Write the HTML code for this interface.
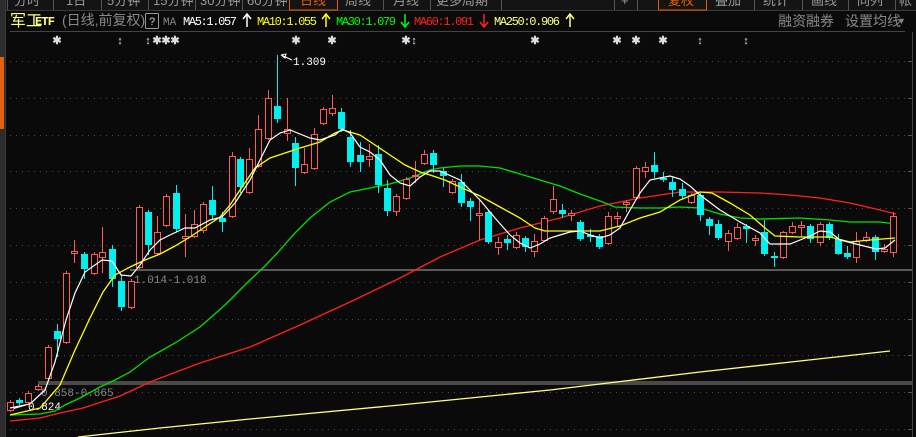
<!DOCTYPE html>
<html><head><meta charset="utf-8"><style>
html,body{margin:0;padding:0;background:#0a0a0a;width:916px;height:437px;overflow:hidden}
svg{display:block}
.t{font-family:"Liberation Sans","Noto Sans CJK SC",sans-serif}
.m{font-family:"Liberation Mono","Noto Sans CJK SC",monospace}
.r line{stroke:#ff5a5a;stroke-width:1}
.r rect{stroke:#ff5a5a;stroke-width:1;fill:#0a0a0a}
.c line{stroke:#00f0f0;stroke-width:1}
.c rect{fill:#00f0f0}
.g{stroke:#4a4a4a;stroke-width:1;stroke-dasharray:1 5}
</style></head><body>
<svg width="916" height="437" viewBox="0 0 916 437" xmlns="http://www.w3.org/2000/svg">
<rect width="916" height="437" fill="#0a0a0a"/>
<rect x="0" y="0" width="5" height="437" fill="#2c2c2c"/>
<rect x="0" y="57" width="4" height="72" fill="#e0600f"/>
<line x1="5.5" y1="0" x2="5.5" y2="437" stroke="#3a3a3a"/>
<rect x="6" y="0" width="910" height="10" fill="#141414"/>
<line x1="6" y1="10.5" x2="916" y2="10.5" stroke="#3a3a3a"/>
<g stroke="#555">
<line x1="7.5" y1="0" x2="7.5" y2="10"/><line x1="53.5" y1="0" x2="53.5" y2="10"/><line x1="101.5" y1="0" x2="101.5" y2="10"/><line x1="148.5" y1="0" x2="148.5" y2="10"/><line x1="195.5" y1="0" x2="195.5" y2="10"/><line x1="242.5" y1="0" x2="242.5" y2="10"/><line x1="383.5" y1="0" x2="383.5" y2="10"/><line x1="430.5" y1="0" x2="430.5" y2="10"/><line x1="501.5" y1="0" x2="501.5" y2="10"/><line x1="614.5" y1="0" x2="614.5" y2="10"/><line x1="637.5" y1="0" x2="637.5" y2="10"/><line x1="754.5" y1="0" x2="754.5" y2="10"/><line x1="802.5" y1="0" x2="802.5" y2="10"/><line x1="848.5" y1="0" x2="848.5" y2="10"/><line x1="895.5" y1="0" x2="895.5" y2="10"/>
</g>
<rect x="289.5" y="-1" width="48" height="11" fill="none" stroke="#e0600f"/>
<rect x="658.5" y="-1" width="48" height="11" fill="none" stroke="#e0600f"/>
<g class="t" font-size="13" fill="#999">
<text x="14" y="5">分时</text><text x="66" y="5">1日</text><text x="107" y="5">5分钟</text><text x="153" y="5">15分钟</text><text x="200" y="5">30分钟</text><text x="247" y="5">60分钟</text><text x="300" y="5" fill="#e0600f">日线</text><text x="345" y="5">周线</text><text x="393" y="5">月线</text><text x="436" y="5">更多周期</text><text x="621" y="5">+</text><text x="668" y="5" fill="#e0600f">复权</text><text x="715" y="5">叠加</text><text x="763" y="5">统计</text><text x="811" y="5">画线</text><text x="857" y="5">同列</text><text x="899" y="5">帐</text>
</g>
<text x="10" y="26" class="t" font-size="16" fill="#ffff80">军工</text>
<text x="35" y="25" class="m" font-size="12" font-weight="bold" fill="#ffff80" textLength="20">ETF</text>
<text x="62" y="25" class="t" font-size="14" fill="#888">(日线,前复权)</text>
<rect x="145.5" y="13.5" width="13" height="15" fill="none" stroke="#999" rx="1"/>
<text x="149" y="25" class="m" font-size="11" fill="#ccc">?</text>
<text x="163" y="25" class="m" font-size="11" fill="#888">MA</text>
<g class="m" font-size="12">
<text x="183" y="25" fill="#fff" textLength="54">MA5:1.057</text>
<text x="257" y="25" fill="#ffff00" textLength="60">MA10:1.055</text>
<text x="336" y="25" fill="#00ff00" textLength="60">MA30:1.079</text>
<text x="414" y="25" fill="#ff2020" textLength="60">MA60:1.091</text>
<text x="494" y="25" fill="#ffff80" textLength="66">MA250:0.906</text>
</g>
<g fill="none" stroke-width="1.5">
<path d="M247 27V15M243 19L247 14L251 19" stroke="#fff"/>
<path d="M326 27V15M322 19L326 14L330 19" stroke="#ffff00"/>
<path d="M405 14V26M401 22L405 27L409 22" stroke="#00ff00"/>
<path d="M484 14V26M480 22L484 27L488 22" stroke="#ff2020"/>
<path d="M570 27V15M566 19L570 14L574 19" stroke="#ffff80"/>
</g>
<text x="778" y="26" class="t" font-size="14" fill="#888">融资融券</text>
<text x="845" y="26" class="t" font-size="14" fill="#888">设置均线</text>
<text x="897" y="24" class="t" font-size="9" fill="#888">▼</text>
<line x1="10" y1="31.5" x2="905" y2="31.5" stroke="#444"/>
<g class="t" font-size="11" fill="#ddd" font-weight="bold" text-anchor="middle">
<text x="57" y="44">✱</text><text x="120" y="44">↕</text><text x="148" y="44">↕</text><text x="157" y="44">✱</text><text x="166" y="44">✱</text><text x="175" y="44">✱</text><text x="296" y="44">✱</text><text x="332" y="44">✱</text><text x="406" y="44">✱</text><text x="414" y="44">↕</text><text x="535" y="44">✱</text><text x="617" y="44">✱</text><text x="636" y="44">✱</text><text x="663" y="44">✱</text><text x="700" y="44">↕</text><text x="746" y="44">↕</text>
</g>
<line x1="912.5" y1="32" x2="912.5" y2="437" stroke="#444"/>
<g class="g">
<line x1="10" y1="61.5" x2="906" y2="61.5"/><line x1="10" y1="98.5" x2="906" y2="98.5"/><line x1="10" y1="135.5" x2="906" y2="135.5"/><line x1="10" y1="171.5" x2="906" y2="171.5"/><line x1="10" y1="208.5" x2="906" y2="208.5"/><line x1="10" y1="245.5" x2="906" y2="245.5"/><line x1="10" y1="282.5" x2="906" y2="282.5"/><line x1="10" y1="319.5" x2="906" y2="319.5"/><line x1="10" y1="355.5" x2="906" y2="355.5"/><line x1="10" y1="392.5" x2="906" y2="392.5"/><line x1="10" y1="429.5" x2="906" y2="429.5"/>
</g>
<g stroke="#555">
<line x1="908" y1="61.5" x2="912" y2="61.5"/><line x1="908" y1="98.5" x2="912" y2="98.5"/><line x1="908" y1="135.5" x2="912" y2="135.5"/><line x1="908" y1="171.5" x2="912" y2="171.5"/><line x1="908" y1="208.5" x2="912" y2="208.5"/><line x1="908" y1="245.5" x2="912" y2="245.5"/><line x1="908" y1="282.5" x2="912" y2="282.5"/><line x1="908" y1="319.5" x2="912" y2="319.5"/><line x1="908" y1="355.5" x2="912" y2="355.5"/><line x1="908" y1="392.5" x2="912" y2="392.5"/><line x1="908" y1="429.5" x2="912" y2="429.5"/>
</g>
<rect x="130" y="269" width="782" height="2" fill="#5a5a5a"/>
<rect x="38" y="381" width="874" height="4" fill="#4a4a4a"/>
<text x="134" y="283" class="m" font-size="11" fill="#888">1.014-1.018</text>
<text x="41" y="396" class="m" font-size="11" fill="#888">0.858-0.865</text>
<text x="28" y="410" class="m" font-size="11" fill="#fff">0.824</text>
<polyline points="12,409 26,405" fill="none" stroke="#fff"/>
<text x="293" y="65" class="m" font-size="11" fill="#fff">1.309</text>
<polyline points="281,55 286,54 285,58 281,55 292,60" fill="none" stroke="#fff"/>
<polyline fill="none" stroke="#ffff80" stroke-width="1.3" points="78,437 160,428 250,419 400,405 550,390 700,372 800,361 890,351"/>
<polyline fill="none" stroke="#ff2020" stroke-width="1.3" points="10,421 40,418 60,413 83,408 120,396 150,382 200,363 250,347 300,325 350,302 400,278 440,257 480,240 520,228 560,218 600,206 640,198 680,192 720,192 760,193 790,195 820,198 850,203 880,210 896,214"/>
<polyline fill="none" stroke="#00e000" stroke-width="1.3" points="10,415 40,414 55,411 65,405 80,398 100,387 115,380 130,372 150,357 175,343 200,327 225,305 250,280 265,266 280,250 295,233 310,218 330,202 350,192 370,188 390,184 410,178 430,170 440,168 460,166 480,166 500,168 520,174 540,180 560,186 580,194 600,201 615,207 640,208 660,208 680,207 700,208 720,214 740,218 760,219 800,218 830,220 850,222 880,222 896,224"/>
<g id="cd">
<g class="r"><line x1="10.5" y1="400" x2="10.5" y2="412"/><rect x="7.5" y="402.5" width="6" height="8"/></g>
<g class="c"><line x1="19.5" y1="398" x2="19.5" y2="405"/><rect x="16" y="400" width="7" height="3"/></g>
<g class="r"><line x1="28.5" y1="391" x2="28.5" y2="404"/><rect x="25.5" y="393.5" width="6" height="9"/></g>
<g class="r"><line x1="38.5" y1="384" x2="38.5" y2="391"/><rect x="35.5" y="386.5" width="6" height="3"/></g>
<g class="r"><line x1="48.5" y1="345" x2="48.5" y2="380"/><rect x="45.5" y="347.5" width="6" height="31"/></g>
<g class="c"><line x1="57.5" y1="324" x2="57.5" y2="357"/><rect x="54" y="331" width="7" height="8"/></g>
<g class="r"><line x1="66.5" y1="271" x2="66.5" y2="344"/><rect x="63.5" y="273.5" width="6" height="69"/></g>
<g class="r"><line x1="74.5" y1="240" x2="74.5" y2="263"/><rect x="71.5" y="251.5" width="6" height="2"/></g>
<g class="c"><line x1="84.5" y1="252" x2="84.5" y2="279"/><rect x="81" y="254" width="7" height="15"/></g>
<g class="r"><line x1="94.5" y1="252" x2="94.5" y2="275"/><rect x="91.5" y="254.5" width="6" height="19"/></g>
<g class="r"><line x1="102.5" y1="227" x2="102.5" y2="273"/><rect x="99.5" y="252.5" width="6" height="5"/></g>
<g class="c"><line x1="112.5" y1="245" x2="112.5" y2="287"/><rect x="109" y="249" width="7" height="30"/></g>
<g class="c"><line x1="121.5" y1="275" x2="121.5" y2="311"/><rect x="118" y="281" width="7" height="26"/></g>
<g class="r"><line x1="131.5" y1="279" x2="131.5" y2="309"/><rect x="128.5" y="281.5" width="6" height="26"/></g>
<g class="r"><line x1="139.5" y1="205" x2="139.5" y2="269"/><rect x="136.5" y="207.5" width="6" height="60"/></g>
<g class="c"><line x1="148.5" y1="210" x2="148.5" y2="255"/><rect x="145" y="212" width="7" height="33"/></g>
<g class="r"><line x1="157.5" y1="216" x2="157.5" y2="255"/><rect x="154.5" y="232.5" width="6" height="21"/></g>
<g class="r"><line x1="166.5" y1="194" x2="166.5" y2="227"/><rect x="163.5" y="196.5" width="6" height="29"/></g>
<g class="c"><line x1="176.5" y1="185" x2="176.5" y2="232"/><rect x="173" y="193" width="7" height="36"/></g>
<g class="r"><line x1="185.5" y1="214" x2="185.5" y2="257"/><rect x="182.5" y="236.5" width="6" height="2"/></g>
<g class="r"><line x1="194.5" y1="210" x2="194.5" y2="238"/><rect x="191.5" y="224.5" width="6" height="12"/></g>
<g class="r"><line x1="203.5" y1="202" x2="203.5" y2="233"/><rect x="200.5" y="204.5" width="6" height="26"/></g>
<g class="c"><line x1="212.5" y1="186" x2="212.5" y2="220"/><rect x="209" y="200" width="7" height="15"/></g>
<g class="c"><line x1="222.5" y1="212" x2="222.5" y2="232"/><rect x="219" y="218" width="7" height="4"/></g>
<g class="r"><line x1="232.5" y1="152" x2="232.5" y2="218"/><rect x="229.5" y="156.5" width="6" height="60"/></g>
<g class="c"><line x1="240.5" y1="157" x2="240.5" y2="193"/><rect x="237" y="159" width="7" height="28"/></g>
<g class="r"><line x1="249.5" y1="148" x2="249.5" y2="194"/><rect x="246.5" y="159.5" width="6" height="33"/></g>
<g class="r"><line x1="258.5" y1="115" x2="258.5" y2="168"/><rect x="255.5" y="129.5" width="6" height="37"/></g>
<g class="r"><line x1="268.5" y1="90" x2="268.5" y2="140"/><rect x="265.5" y="98.5" width="6" height="40"/></g>
<g class="c"><line x1="277.5" y1="55" x2="277.5" y2="123"/><rect x="274" y="106" width="7" height="13"/></g>
<g class="r"><line x1="287.5" y1="98" x2="287.5" y2="141"/><rect x="284.5" y="129.5" width="6" height="4"/></g>
<g class="c"><line x1="295.5" y1="137" x2="295.5" y2="186"/><rect x="292" y="143" width="7" height="25"/></g>
<g class="r"><line x1="304.5" y1="148" x2="304.5" y2="174"/><rect x="301.5" y="164.5" width="6" height="8"/></g>
<g class="r"><line x1="314.5" y1="128" x2="314.5" y2="170"/><rect x="311.5" y="134.5" width="6" height="34"/></g>
<g class="r"><line x1="323.5" y1="107" x2="323.5" y2="125"/><rect x="320.5" y="109.5" width="6" height="14"/></g>
<g class="r"><line x1="332.5" y1="95" x2="332.5" y2="116"/><rect x="329.5" y="108.5" width="6" height="5"/></g>
<g class="c"><line x1="341.5" y1="108" x2="341.5" y2="132"/><rect x="338" y="112" width="7" height="17"/></g>
<g class="c"><line x1="350.5" y1="130" x2="350.5" y2="167"/><rect x="347" y="137" width="7" height="25"/></g>
<g class="c"><line x1="360.5" y1="142" x2="360.5" y2="172"/><rect x="357" y="155" width="7" height="7"/></g>
<g class="r"><line x1="369.5" y1="144" x2="369.5" y2="167"/><rect x="366.5" y="156.5" width="6" height="3"/></g>
<g class="c"><line x1="378.5" y1="145" x2="378.5" y2="193"/><rect x="375" y="154" width="7" height="31"/></g>
<g class="c"><line x1="387.5" y1="180" x2="387.5" y2="216"/><rect x="384" y="188" width="7" height="23"/></g>
<g class="r"><line x1="396.5" y1="194" x2="396.5" y2="216"/><rect x="393.5" y="196.5" width="6" height="15"/></g>
<g class="r"><line x1="406.5" y1="177" x2="406.5" y2="200"/><rect x="403.5" y="179.5" width="6" height="19"/></g>
<g class="r"><line x1="415.5" y1="161" x2="415.5" y2="183"/><rect x="412.5" y="175.5" width="6" height="1"/></g>
<g class="r"><line x1="424.5" y1="150" x2="424.5" y2="165"/><rect x="421.5" y="154.5" width="6" height="9"/></g>
<g class="c"><line x1="433.5" y1="150" x2="433.5" y2="173"/><rect x="430" y="153" width="7" height="12"/></g>
<g class="c"><line x1="443.5" y1="168" x2="443.5" y2="187"/><rect x="440" y="171" width="7" height="5"/></g>
<g class="r"><line x1="452.5" y1="179" x2="452.5" y2="194"/><rect x="449.5" y="181.5" width="6" height="11"/></g>
<g class="c"><line x1="461.5" y1="174" x2="461.5" y2="207"/><rect x="458" y="182" width="7" height="21"/></g>
<g class="c"><line x1="470.5" y1="198" x2="470.5" y2="221"/><rect x="467" y="201" width="7" height="6"/></g>
<g class="r"><line x1="479.5" y1="199" x2="479.5" y2="240"/><rect x="476.5" y="213.5" width="6" height="2"/></g>
<g class="c"><line x1="488.5" y1="210" x2="488.5" y2="244"/><rect x="485" y="212" width="7" height="30"/></g>
<g class="r"><line x1="498.5" y1="237" x2="498.5" y2="255"/><rect x="495.5" y="242.5" width="6" height="5"/></g>
<g class="c"><line x1="507.5" y1="235" x2="507.5" y2="250"/><rect x="504" y="239" width="7" height="4"/></g>
<g class="r"><line x1="516.5" y1="232" x2="516.5" y2="249"/><rect x="513.5" y="235.5" width="6" height="12"/></g>
<g class="c"><line x1="525.5" y1="236" x2="525.5" y2="252"/><rect x="522" y="238" width="7" height="9"/></g>
<g class="r"><line x1="534.5" y1="234" x2="534.5" y2="257"/><rect x="531.5" y="241.5" width="6" height="10"/></g>
<g class="r"><line x1="544.5" y1="216" x2="544.5" y2="242"/><rect x="541.5" y="218.5" width="6" height="22"/></g>
<g class="r"><line x1="553.5" y1="186" x2="553.5" y2="214"/><rect x="550.5" y="199.5" width="6" height="12"/></g>
<g class="c"><line x1="562.5" y1="204" x2="562.5" y2="218"/><rect x="559" y="210" width="7" height="4"/></g>
<g class="r"><line x1="571.5" y1="210" x2="571.5" y2="221"/><rect x="568.5" y="213.5" width="6" height="2"/></g>
<g class="c"><line x1="580.5" y1="220" x2="580.5" y2="241"/><rect x="577" y="222" width="7" height="17"/></g>
<g class="c"><line x1="590.5" y1="229" x2="590.5" y2="242"/><rect x="587" y="235" width="7" height="2"/></g>
<g class="c"><line x1="599.5" y1="234" x2="599.5" y2="249"/><rect x="596" y="236" width="7" height="11"/></g>
<g class="r"><line x1="608.5" y1="212" x2="608.5" y2="245"/><rect x="605.5" y="216.5" width="6" height="27"/></g>
<g class="r"><line x1="617.5" y1="212" x2="617.5" y2="227"/><rect x="614.5" y="216.5" width="6" height="2"/></g>
<g class="r"><line x1="626.5" y1="200" x2="626.5" y2="212"/><rect x="623.5" y="202.5" width="6" height="2"/></g>
<g class="r"><line x1="636.5" y1="166" x2="636.5" y2="200"/><rect x="633.5" y="168.5" width="6" height="29"/></g>
<g class="r"><line x1="645.5" y1="162" x2="645.5" y2="178"/><rect x="642.5" y="167.5" width="6" height="4"/></g>
<g class="c"><line x1="654.5" y1="152" x2="654.5" y2="178"/><rect x="651" y="165" width="7" height="7"/></g>
<g class="c"><line x1="663.5" y1="172" x2="663.5" y2="182"/><rect x="660" y="178" width="7" height="2"/></g>
<g class="c"><line x1="672.5" y1="177" x2="672.5" y2="197"/><rect x="669" y="182" width="7" height="8"/></g>
<g class="c"><line x1="682.5" y1="183" x2="682.5" y2="199"/><rect x="679" y="189" width="7" height="7"/></g>
<g class="r"><line x1="691.5" y1="193" x2="691.5" y2="204"/><rect x="688.5" y="195.5" width="6" height="7"/></g>
<g class="c"><line x1="700.5" y1="193" x2="700.5" y2="221"/><rect x="697" y="195" width="7" height="20"/></g>
<g class="c"><line x1="709.5" y1="217" x2="709.5" y2="235"/><rect x="706" y="219" width="7" height="7"/></g>
<g class="c"><line x1="718.5" y1="220" x2="718.5" y2="240"/><rect x="715" y="224" width="7" height="14"/></g>
<g class="r"><line x1="728.5" y1="230" x2="728.5" y2="251"/><rect x="725.5" y="233.5" width="6" height="8"/></g>
<g class="r"><line x1="737.5" y1="223" x2="737.5" y2="240"/><rect x="734.5" y="227.5" width="6" height="11"/></g>
<g class="c"><line x1="746.5" y1="224" x2="746.5" y2="243"/><rect x="743" y="226" width="7" height="3"/></g>
<g class="r"><line x1="755.5" y1="235" x2="755.5" y2="246"/><rect x="752.5" y="238.5" width="6" height="2"/></g>
<g class="c"><line x1="764.5" y1="220" x2="764.5" y2="256"/><rect x="761" y="232" width="7" height="22"/></g>
<g class="c"><line x1="774.5" y1="252" x2="774.5" y2="267"/><rect x="771" y="256" width="7" height="2"/></g>
<g class="r"><line x1="783.5" y1="231" x2="783.5" y2="259"/><rect x="780.5" y="232.5" width="6" height="25"/></g>
<g class="r"><line x1="792.5" y1="222" x2="792.5" y2="234"/><rect x="789.5" y="226.5" width="6" height="6"/></g>
<g class="r"><line x1="801.5" y1="221" x2="801.5" y2="237"/><rect x="798.5" y="225.5" width="6" height="2"/></g>
<g class="c"><line x1="810.5" y1="224" x2="810.5" y2="243"/><rect x="807" y="226" width="7" height="13"/></g>
<g class="r"><line x1="820.5" y1="222" x2="820.5" y2="246"/><rect x="817.5" y="224.5" width="6" height="18"/></g>
<g class="c"><line x1="829.5" y1="222" x2="829.5" y2="240"/><rect x="826" y="224" width="7" height="14"/></g>
<g class="c"><line x1="838.5" y1="234" x2="838.5" y2="255"/><rect x="835" y="239" width="7" height="15"/></g>
<g class="c"><line x1="847.5" y1="246" x2="847.5" y2="259"/><rect x="844" y="253" width="7" height="4"/></g>
<g class="r"><line x1="856.5" y1="232" x2="856.5" y2="263"/><rect x="853.5" y="241.5" width="6" height="16"/></g>
<g class="r"><line x1="866.5" y1="232" x2="866.5" y2="242"/><rect x="863.5" y="237.5" width="6" height="3"/></g>
<g class="c"><line x1="875.5" y1="235" x2="875.5" y2="260"/><rect x="872" y="237" width="7" height="15"/></g>
<g class="r"><line x1="884.5" y1="244" x2="884.5" y2="253"/><rect x="881.5" y="249.5" width="6" height="2"/></g>
<g class="r"><line x1="893.5" y1="212" x2="893.5" y2="257"/><rect x="890.5" y="216.5" width="6" height="36"/></g>
</g>
<polyline fill="none" stroke="#ffff00" stroke-width="1.3" points="10,415 40,408 60,385 75,350 90,318 103,292 115,275 130,267 145,260 160,254 175,246 190,237 205,227 220,217 230,205 240,190 255,168 270,158 285,153 300,148 320,142 335,133 343,130 360,135 375,145 390,155 405,165 420,172 430,175 445,180 460,187 480,196 500,207 520,218 535,228 545,231 600,231 620,226 640,218 660,212 680,200 700,192 712,193 730,203 750,215 765,228 775,236 800,237 830,237 850,242 870,240 895,238"/>
<polyline fill="none" stroke="#ffffff" stroke-width="1.2" points="10,408 30,404 45,390 55,362 66,320 75,293 85,272 102,260 112,261 121,275 131,276 140,265 150,250 160,240 170,235 185,228 195,228 210,220 222,217 235,203 250,180 260,160 270,140 280,133 290,130 300,134 310,138 320,140 335,135 342,129 350,133 360,147 370,152 380,160 390,175 400,183 410,186 420,177 430,171 440,171 460,180 480,200 495,218 510,235 520,243 530,248 540,244 550,238 560,235 570,232 580,231 590,235 600,238 610,235 620,228 630,210 640,193 650,180 660,178 670,176 680,179 690,186 700,195 720,210 740,222 760,233 770,244 790,244 810,236 820,231 830,232 840,240 860,245 876,249 885,248 895,240"/>
</svg>
</body></html>
